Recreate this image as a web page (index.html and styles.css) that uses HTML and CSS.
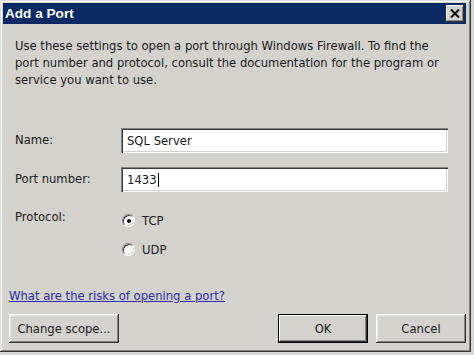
FILE: index.html
```html
<!DOCTYPE html>
<html>
<head>
<meta charset="utf-8">
<title>Add a Port</title>
<link rel="stylesheet" href="styles.css">
</head>
<body>
<div class="window">
  <div class="titlebar">
    <span class="title">Add a Port</span>
    <button class="close" aria-label="Close">
      <svg width="10" height="9" viewBox="0 0 10 9"><path d="M1 0.5 L9 8.5 M9 0.5 L1 8.5" stroke="#000" stroke-width="2" fill="none"/></svg>
    </button>
  </div>
  <div class="content">
    <p class="intro">Use these settings to open a port through Windows Firewall. To find the<br>port number and protocol, consult the documentation for the program or<br>service you want to use.</p>
    <div class="form">
      <label class="label">Name:</label>
      <div class="input">SQL Server</div>
      <label class="label">Port number:</label>
      <div class="input">1433<span class="caret"></span></div>
      <label class="label proto-label">Protocol:</label>
      <div class="radios">
        <div class="option"><span class="radio checked"></span><span>TCP</span></div>
        <div class="option"><span class="radio"></span><span>UDP</span></div>
      </div>
    </div>
    <a class="link" href="#">What are the risks of opening a port?</a>
    <div class="buttons">
      <button class="btn scope">Change scope...</button>
      <span class="spacer"></span>
      <button class="btn default">OK</button>
      <button class="btn">Cancel</button>
    </div>
  </div>
</div>
</body>
</html>
```
FILE: styles.css
```css
* { box-sizing: border-box; }
html, body { margin: 0; padding: 0; }
body {
  background: #d9d8d4;
  width: 474px;
  height: 355px;
  overflow: hidden;
  font-family: "DejaVu Sans", sans-serif;
  font-size: 11.6px;
  color: #1a1a1a;
}
.window {
  width: 471px;
  height: 352px;
  background: #d3d2cd;
  padding: 3px 5px 3px 3px;
  box-shadow: inset -1px -1px 0 #333, inset 1px 1px 0 #dcdcd8, inset -2px -2px 0 #85857f, inset 2px 2px 0 #fff;
  display: flex;
  flex-direction: column;
}
.titlebar {
  height: 21px;
  background: #0b2a64;
  display: flex;
  align-items: center;
  justify-content: space-between;
  padding: 0 2px 0 2px;
}
.title {
  font-family: "Liberation Sans", sans-serif;
  font-weight: bold;
  font-size: 13.6px;
  color: #fff;
}
.close {
  width: 18px;
  height: 17px;
  padding: 0;
  margin: 0;
  border: none;
  background: #d3d2cd;
  box-shadow: inset -1px -1px 0 #333, inset 1px 1px 0 #fff, inset -2px -2px 0 #85857f;
  display: flex;
  align-items: center;
  justify-content: center;
}
.close svg { display: block; margin-top: -1px; }
.content {
  flex: 1;
  padding: 14px 0 0 6px;
  display: flex;
  flex-direction: column;
  align-items: flex-start;
}
.intro {
  margin: 0 0 0 6px;
  line-height: 17px;
}
.form {
  margin: 39px 0 0 6px;
  width: 433px;
  display: grid;
  grid-template-columns: 106px 1fr;
  row-gap: 14px;
  align-items: center;
}
.label { line-height: 17px; }
.input {
  height: 25px;
  background: #fff;
  padding-left: 6px;
  display: flex;
  align-items: center;
  box-shadow: inset 1px 1px 0 #85857f, inset 2px 2px 0 #3a3a3a, inset -1px -1px 0 #fff, inset -2px -2px 0 #d3d2cd;
}
.caret {
  display: inline-block;
  width: 1px;
  height: 14px;
  background: #000;
  margin-left: 1px;
}
.proto-label { align-self: start; margin-top: 3px; }
.radios {
  align-self: start;
  margin-top: 6px;
  display: flex;
  flex-direction: column;
  gap: 12px;
}
.option {
  height: 17px;
  display: flex;
  align-items: center;
  gap: 7px;
  padding-left: 1px;
}
.radio {
  width: 13px;
  height: 13px;
  border-radius: 50%;
  background: #fff;
  border: 1px solid;
  border-color: #85857f #fff #fff #85857f;
  box-shadow: inset 1px 1px 0 #3a3a3a, inset -1px -1px 0 #d3d2cd;
  display: flex;
  align-items: center;
  justify-content: center;
}
.radio.checked::after {
  content: "";
  width: 4px;
  height: 4px;
  border-radius: 50%;
  background: #000;
}
.link {
  margin-top: 30px;
  line-height: 17px;
  color: #2b2ba6;
  text-decoration: underline;
}
.buttons {
  margin-top: 9px;
  width: 100%;
  display: flex;
  gap: 8px;
}
.spacer { flex: 1; }
.btn {
  height: 29px;
  width: 90px;
  padding: 0;
  font-family: "DejaVu Sans", sans-serif;
  font-size: 11.6px;
  color: #1a1a1a;
  background: #d3d2cd;
  border: none;
  box-shadow: inset -1px -1px 0 #333, inset 1px 1px 0 #fff, inset -2px -2px 0 #85857f, inset 2px 2px 0 #e8e8e4;
}
.btn.scope { width: 110px; }
.btn.default {
  border: 1px solid #000;
  box-shadow: inset -1px -1px 0 #333, inset 1px 1px 0 #fff, inset -2px -2px 0 #85857f;
}
```
